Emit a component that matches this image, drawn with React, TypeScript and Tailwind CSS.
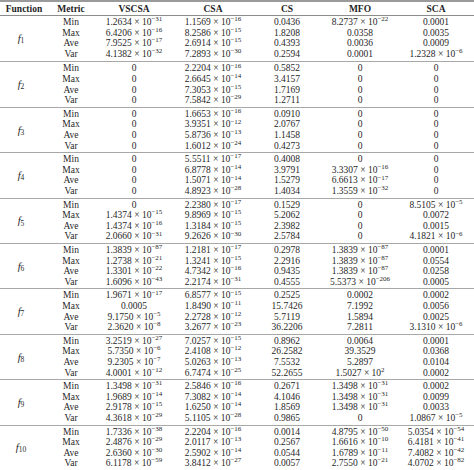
import React from "react";

type Group = {
  fn: number;
  cols: string[][]; // VSCSA, CSA, CS, MFO, SCA
};

const metrics = ["Min", "Max", "Ave", "Var"];

const groups: Group[] = [
  {
    fn: 1,
    cols: [
      ["1.2634e-31", "6.4206e-16", "7.9525e-17", "4.1382e-32"],
      ["1.1569e-16", "8.2586e-15", "2.6914e-15", "7.2893e-30"],
      ["0.0436", "1.8208", "0.4393", "0.2594"],
      ["8.2737e-22", "0.0358", "0.0036", "0.0001"],
      ["0.0001", "0.0035", "0.0009", "1.2328e-6"],
    ],
  },
  {
    fn: 2,
    cols: [
      ["0", "0", "0", "0"],
      ["2.2204e-16", "2.6645e-14", "7.3053e-15", "7.5842e-29"],
      ["0.5852", "3.4157", "1.7169", "1.2711"],
      ["0", "0", "0", "0"],
      ["0", "0", "0", "0"],
    ],
  },
  {
    fn: 3,
    cols: [
      ["0", "0", "0", "0"],
      ["1.6653e-16", "3.9351e-12", "5.8736e-13", "1.6012e-24"],
      ["0.0910", "2.0767", "1.1458", "0.4273"],
      ["0", "0", "0", "0"],
      ["0", "0", "0", "0"],
    ],
  },
  {
    fn: 4,
    cols: [
      ["0", "0", "0", "0"],
      ["5.5511e-17", "6.8778e-14", "1.5071e-14", "4.8923e-28"],
      ["0.4008", "3.9791", "1.5279", "1.4034"],
      ["0", "3.3307e-16", "6.6613e-17", "1.3559e-32"],
      ["0", "0", "0", "0"],
    ],
  },
  {
    fn: 5,
    cols: [
      ["0", "1.4374e-15", "1.4374e-16", "2.0660e-31"],
      ["2.2380e-17", "9.8969e-15", "1.3184e-15", "9.2626e-30"],
      ["0.1529", "5.2062", "2.3982", "2.5784"],
      ["0", "0", "0", "0"],
      ["8.5105e-5", "0.0072", "0.0015", "4.1821e-6"],
    ],
  },
  {
    fn: 6,
    cols: [
      ["1.3839e-87", "1.2738e-21", "1.3301e-22", "1.6096e-43"],
      ["1.2181e-17", "1.3241e-15", "4.7342e-16", "2.2174e-31"],
      ["0.2978", "2.2916", "0.9435", "0.4555"],
      ["1.3839e-87", "1.3839e-87", "1.3839e-87", "5.5373e-206"],
      ["0.0001", "0.0554", "0.0258", "0.0005"],
    ],
  },
  {
    fn: 7,
    cols: [
      ["1.9671e-17", "0.0005", "9.1750e-5", "2.3620e-8"],
      ["6.8577e-15", "1.8490e-11", "2.2728e-12", "3.2677e-23"],
      ["0.2525", "15.7426", "5.7119", "36.2206"],
      ["0.0002", "7.1992", "1.5894", "7.2811"],
      ["0.0002", "0.0056", "0.0025", "3.1310e-6"],
    ],
  },
  {
    fn: 8,
    cols: [
      ["3.2519e-27", "5.7350e-6", "9.2305e-7", "4.0001e-12"],
      ["7.0257e-15", "2.4108e-12", "5.0263e-13", "6.7474e-25"],
      ["0.8962", "26.2582", "7.5532", "52.2655"],
      ["0.0064", "39.3529", "5.2897", "1.5027e2"],
      ["0.0001", "0.0368", "0.0104", "0.0002"],
    ],
  },
  {
    fn: 9,
    cols: [
      ["1.3498e-31", "1.9689e-14", "2.9178e-15", "4.3618e-29"],
      ["2.5846e-16", "7.3082e-14", "1.6250e-14", "5.1105e-28"],
      ["0.2671", "4.1046", "1.8569", "0.9865"],
      ["1.3498e-31", "1.3498e-31", "1.3498e-31", "0"],
      ["0.0002", "0.0099", "0.0033", "1.0867e-5"],
    ],
  },
  {
    fn: 10,
    cols: [
      ["1.7336e-38", "2.4876e-29", "2.6360e-30", "6.1178e-59"],
      ["2.2204e-16", "2.0117e-13", "2.5902e-14", "3.8412e-27"],
      ["0.0014", "0.2567", "0.0544", "0.0057"],
      ["4.8795e-50", "1.6616e-10", "1.6789e-11", "2.7550e-21"],
      ["5.0354e-54", "6.4181e-41", "7.4082e-42", "4.0702e-82"],
    ],
  },
];

const grid = "grid grid-cols-[48px_46px_80px_78px_70px_76px_76px]";

const Num: React.FC<{ v: string }> = ({ v }) => {
  if (!v.includes("e")) return <>{v}</>;
  const [m, e] = v.split("e");
  const exp = e.startsWith("-") ? "\u2212" + e.slice(1) : e;
  return (
    <>
      {m} × 10
      <sup className="text-[7px] top-[-0.55em]">{exp}</sup>
    </>
  );
};

export default function App() {
  return (
    <div
      className="w-[474px] h-[470px] bg-white text-[#1f1f1f] text-[9.5px] overflow-hidden"
      style={{ fontFamily: '"Liberation Serif", "Times New Roman", serif' }}
    >
      {/* header */}
      <div className={`${grid} h-[16px] items-center border-t-2 border-b border-t-[#9a9a9a] border-b-[#8c8c8c] font-bold text-center`}>
        <div>Function</div>
        <div>Metric</div>
        <div>VSCSA</div>
        <div>CSA</div>
        <div>CS</div>
        <div>MFO</div>
        <div>SCA</div>
      </div>

      {groups.map((g, gi) => (
        <div
          key={g.fn}
          className={`${grid} h-[45.4px] pt-[1px] ${gi > 0 ? "border-t border-[#a8a8a8]" : ""}`}
        >
          <div className="flex items-center justify-center pr-[6px] text-[10.5px]">
            <span className="italic">f</span>
            <sub className="text-[7.5px] bottom-[-0.3em]">{g.fn}</sub>
          </div>
          <div className="flex flex-col text-center">
            {metrics.map((m) => (
              <div key={m} className="h-[10.6px] leading-[10.6px]">{m}</div>
            ))}
          </div>
          {g.cols.map((col, ci) => (
            <div key={ci} className="flex flex-col text-center">
              {col.map((v, ri) => (
                <div key={ri} className="h-[10.6px] leading-[10.6px] whitespace-nowrap">
                  <Num v={v} />
                </div>
              ))}
            </div>
          ))}
        </div>
      ))}
    </div>
  );
}
